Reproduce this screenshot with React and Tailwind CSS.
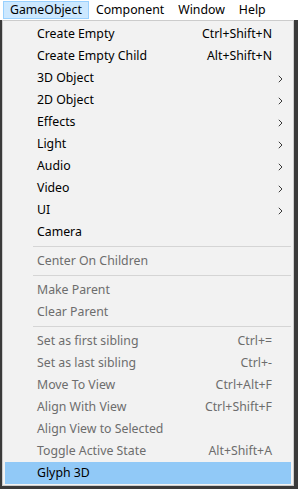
const MENUS = ['GameObject', 'Component', 'Window', 'Help'];

// sep: separator before the item
const ITEMS = [
  { label: 'Create Empty', shortcut: 'Ctrl+Shift+N' },
  { label: 'Create Empty Child', shortcut: 'Alt+Shift+N' },
  { label: '3D Object', sub: true },
  { label: '2D Object', sub: true },
  { label: 'Effects', sub: true },
  { label: 'Light', sub: true },
  { label: 'Audio', sub: true },
  { label: 'Video', sub: true },
  { label: 'UI', sub: true },
  { label: 'Camera' },
  { sep: true },
  { label: 'Center On Children', disabled: true },
  { sep: true },
  { label: 'Make Parent', disabled: true },
  { label: 'Clear Parent', disabled: true },
  { sep: true },
  { label: 'Set as first sibling', shortcut: 'Ctrl+=', disabled: true },
  { label: 'Set as last sibling', shortcut: 'Ctrl+-', disabled: true },
  { label: 'Move To View', shortcut: 'Ctrl+Alt+F', disabled: true },
  { label: 'Align With View', shortcut: 'Ctrl+Shift+F', disabled: true },
  { label: 'Align View to Selected', disabled: true },
  { label: 'Toggle Active State', shortcut: 'Alt+Shift+A', disabled: true },
  { label: 'Glyph 3D', active: true },
];

function Chevron() {
  return (
    <svg width="5" height="8" viewBox="0 0 5 8" className="block">
      <path d="M0.8 0.8 L4 4 L0.8 7.2" fill="none" stroke="#3a3a3a" strokeWidth="1" />
    </svg>
  );
}

export default function App() {
  return (
    <div className="w-[298px] h-[489px] overflow-hidden flex flex-col bg-[#3a3a3a] text-[12.3px] text-black" style={{ fontFamily: "'Noto Sans', 'Open Sans', sans-serif" }}>

      {/* Menu bar */}
      <div className="h-[20px] bg-white flex items-start pl-[3px] pt-[1px] shrink-0">
        {MENUS.map((m, i) => (
          <div key={m} className={`h-[18px] px-[6px] flex items-center leading-none border ${i === 0 ? 'bg-[#cce8ff] border-[#99d1ff]' : 'border-transparent'}`}>
            {m}
          </div>
        ))}
      </div>

      {/* Dropdown */}
      <div className="flex flex-1 items-start">
        <div className="w-[2px] shrink-0" />
        <div className="w-[292px] border border-[#cccccc] bg-[#f2f2f2] px-[2px] pt-[2px] pb-[1px] flex flex-col">
          {ITEMS.map((it, i) =>
            it.sep ? (
              <div key={i} className="h-[7px] pt-[3px] pl-[28px]">
                <div className="h-px bg-[#d5d5d5]" />
              </div>
            ) : (
              <div
                key={i}
                className={`h-[22px] flex items-center pl-[32px] pt-[1px] leading-none ${it.active ? 'bg-[#91c9f7]' : ''} ${it.disabled ? 'text-[#6d6d6d]' : 'text-black'}`}
              >
                <span className="flex-1">{it.label}</span>
                {it.shortcut && <span>{it.shortcut}</span>}
                <span className="w-[19px] pl-[6px] flex items-center">{it.sub && <Chevron />}</span>
              </div>
            )
          )}
        </div>
      </div>
    </div>
  );
}
